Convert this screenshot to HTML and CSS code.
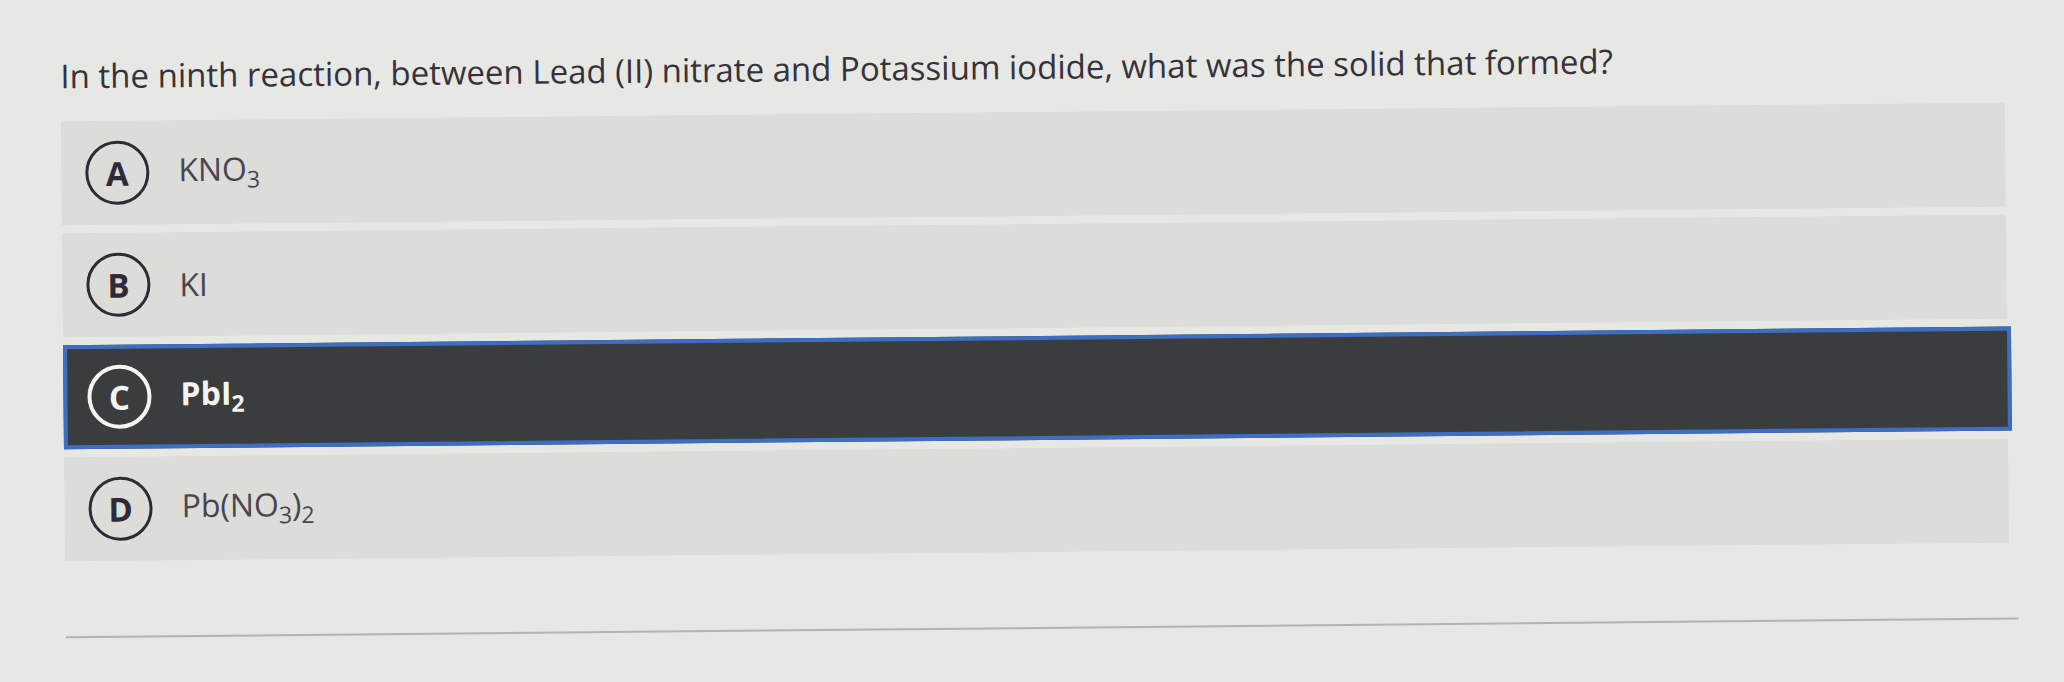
FILE: index.html
```html
<!DOCTYPE html>
<html lang="en">
<head>
<meta charset="utf-8">
<title>Question</title>
<link rel="stylesheet" href="styles.css">
</head>
<body>
<div class="page">
  <p class="question">In the ninth reaction, between Lead (II) nitrate and Potassium iodide, what was the solid that formed?</p>
  <div class="options">
    <div class="option">
      <span class="badge">A</span>
      <span class="label">KNO<sub class="sub">3</sub></span>
    </div>
    <div class="option">
      <span class="badge">B</span>
      <span class="label">KI</span>
    </div>
    <div class="option selected">
      <span class="badge">C</span>
      <span class="label">PbI<sub class="sub">2</sub></span>
    </div>
    <div class="option">
      <span class="badge">D</span>
      <span class="label">Pb(NO<sub class="sub">3</sub>)<sub class="sub">2</sub></span>
    </div>
  </div>
  <div class="divider"></div>
</div>
</body>
</html>
```
FILE: styles.css
```css
html, body {
  margin: 0;
  padding: 0;
  background: #e7e7e4;
  height: 100%;
  overflow: hidden;
}
.page {
  padding: 47px 57px 0 63px;
  font-family: "Open Sans", "DejaVu Sans", sans-serif;
  transform: rotate(-0.55deg);
  transform-origin: 1032px 341px;
}
.question {
  margin: 0 0 25px 0;
  font-size: 33px;
  line-height: 40px;
  color: #35323b;
  white-space: nowrap;
}
.options {
  display: flex;
  flex-direction: column;
  gap: 8px;
}
.option {
  height: 104px;
  box-sizing: border-box;
  background: #dcdcd9;
  display: flex;
  align-items: center;
  padding-left: 24px;
  gap: 29px;
}
.badge {
  width: 64px;
  height: 64px;
  box-sizing: border-box;
  border: 3.5px solid #2e2b36;
  border-radius: 50%;
  display: flex;
  align-items: center;
  justify-content: center;
  font-size: 33px;
  font-weight: 700;
  color: #2e2b36;
  line-height: 1;
}
.label {
  font-size: 32px;
  color: #48454f;
  line-height: 1;
}
.sub {
  font-size: 23px;
  vertical-align: -7px;
  line-height: 1;
}
.selected {
  background: #3a3c3e;
  border: 4px solid #3d6ec2;
  padding-left: 20px;
  margin-right: -4px;
}
.selected .badge {
  border-color: #f4f4f0;
  color: #f4f4f0;
  border-width: 4px;
}
.selected .label {
  color: #f4f4f0;
  font-weight: 700;
}
.divider {
  margin-top: 75px;
  margin-right: -9px;
  height: 2px;
  background: #b3b3b2;
}
```
